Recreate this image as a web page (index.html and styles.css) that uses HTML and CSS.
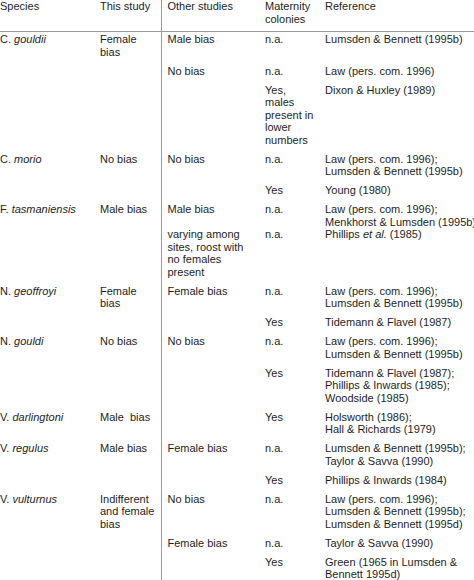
FILE: index.html
```html
<!DOCTYPE html>
<html>
<head>
<meta charset="utf-8">
<link rel="stylesheet" href="styles.css">
</head>
<body>
<table class="sex-table">
  <colgroup>
    <col class="c-species">
    <col class="c-this">
    <col class="c-other">
    <col class="c-mat">
    <col class="c-ref">
  </colgroup>
  <thead>
    <tr>
      <th>Species</th>
      <th>This study</th>
      <th>Other studies</th>
      <th>Maternity colonies</th>
      <th>Reference</th>
    </tr>
  </thead>
  <tbody>
    <tr>
      <td>C. <i>gouldii</i></td>
      <td>Female bias</td>
      <td>Male bias</td>
      <td>n.a.</td>
      <td>Lumsden &amp; Bennett (1995b)</td>
    </tr>
    <tr>
      <td></td><td></td>
      <td>No bias</td>
      <td>n.a.</td>
      <td>Law (pers. com. 1996)</td>
    </tr>
    <tr>
      <td></td><td></td><td></td>
      <td>Yes, males present in lower numbers</td>
      <td>Dixon &amp; Huxley (1989)</td>
    </tr>
    <tr>
      <td>C. <i>morio</i></td>
      <td>No bias</td>
      <td>No bias</td>
      <td>n.a.</td>
      <td>Law (pers. com. 1996);<br>Lumsden &amp; Bennett (1995b)</td>
    </tr>
    <tr>
      <td></td><td></td><td></td>
      <td>Yes</td>
      <td>Young (1980)</td>
    </tr>
    <tr class="tight">
      <td>F. <i>tasmaniensis</i></td>
      <td>Male bias</td>
      <td>Male bias</td>
      <td>n.a.</td>
      <td>Law (pers. com. 1996);<br>Menkhorst &amp; Lumsden (1995b)</td>
    </tr>
    <tr>
      <td></td><td></td>
      <td>varying among sites, roost with no females present</td>
      <td>n.a.</td>
      <td>Phillips <i>et al.</i> (1985)</td>
    </tr>
    <tr>
      <td>N. <i>geoffroyi</i></td>
      <td>Female bias</td>
      <td>Female bias</td>
      <td>n.a.</td>
      <td>Law (pers. com. 1996);<br>Lumsden &amp; Bennett (1995b)</td>
    </tr>
    <tr>
      <td></td><td></td><td></td>
      <td>Yes</td>
      <td>Tidemann &amp; Flavel (1987)</td>
    </tr>
    <tr>
      <td>N. <i>gouldi</i></td>
      <td>No bias</td>
      <td>No bias</td>
      <td>n.a.</td>
      <td>Law (pers. com. 1996);<br>Lumsden &amp; Bennett (1995b)</td>
    </tr>
    <tr>
      <td></td><td></td><td></td>
      <td>Yes</td>
      <td>Tidemann &amp; Flavel (1987);<br>Phillips &amp; Inwards (1985);<br>Woodside (1985)</td>
    </tr>
    <tr>
      <td>V. <i>darlingtoni</i></td>
      <td>Male&nbsp; bias</td>
      <td></td>
      <td>Yes</td>
      <td>Holsworth (1986);<br>Hall &amp; Richards (1979)</td>
    </tr>
    <tr>
      <td>V. <i>regulus</i></td>
      <td>Male bias</td>
      <td>Female bias</td>
      <td>n.a.</td>
      <td>Lumsden &amp; Bennett (1995b);<br>Taylor &amp; Savva (1990)</td>
    </tr>
    <tr>
      <td></td><td></td><td></td>
      <td>Yes</td>
      <td>Phillips &amp; Inwards (1984)</td>
    </tr>
    <tr>
      <td>V. <i>vulturnus</i></td>
      <td>Indifferent and female bias</td>
      <td>No bias</td>
      <td>n.a.</td>
      <td>Law (pers. com. 1996);<br>Lumsden &amp; Bennett (1995b);<br>Lumsden &amp; Bennett (1995d)</td>
    </tr>
    <tr>
      <td></td><td></td>
      <td>Female bias</td>
      <td>n.a.</td>
      <td>Taylor &amp; Savva (1990)</td>
    </tr>
    <tr>
      <td></td><td></td><td></td>
      <td>Yes</td>
      <td>Green (1965 in Lumsden &amp; Bennett 1995d)</td>
    </tr>
  </tbody>
</table>
</body>
</html>
```

FILE: styles.css
```css
html, body {
  margin: 0;
  padding: 0;
  background: #ffffff;
  overflow: hidden;
}

.sex-table {
  border-collapse: collapse;
  table-layout: fixed;
  width: 480px;
  font-family: "Liberation Sans", Arial, sans-serif;
  font-size: 11px;
  line-height: 12.5px;
  color: #1e1e1e;
}

.c-species { width: 100px; }
.c-this { width: 61px; }
.c-other { width: 103px; }
.c-mat { width: 61px; }
.c-ref { width: 155px; }

.sex-table th,
.sex-table td {
  text-align: left;
  vertical-align: top;
  font-weight: normal;
  padding: 0 0 6.5px 0;
}

.sex-table th {
  border-bottom: 1px solid #9a9a9a;
  padding-top: 0;
  padding-bottom: 6px;
}

.sex-table th:nth-child(1),
.sex-table td:nth-child(1) { padding-left: 0; padding-right: 4px; }

.sex-table th:nth-child(2),
.sex-table td:nth-child(2) { padding-right: 4px; }

.sex-table th:nth-child(3),
.sex-table td:nth-child(3) {
  border-left: 1px solid #9a9a9a;
  padding-left: 6px;
  padding-right: 11px;
}

.sex-table th:nth-child(4),
.sex-table td:nth-child(4) { padding-left: 1px; padding-right: 9px; }

.sex-table tbody tr:first-child td { padding-top: 1px; }

.sex-table tr.tight td { padding-bottom: 0; }

.sex-table i { font-style: italic; }
```
